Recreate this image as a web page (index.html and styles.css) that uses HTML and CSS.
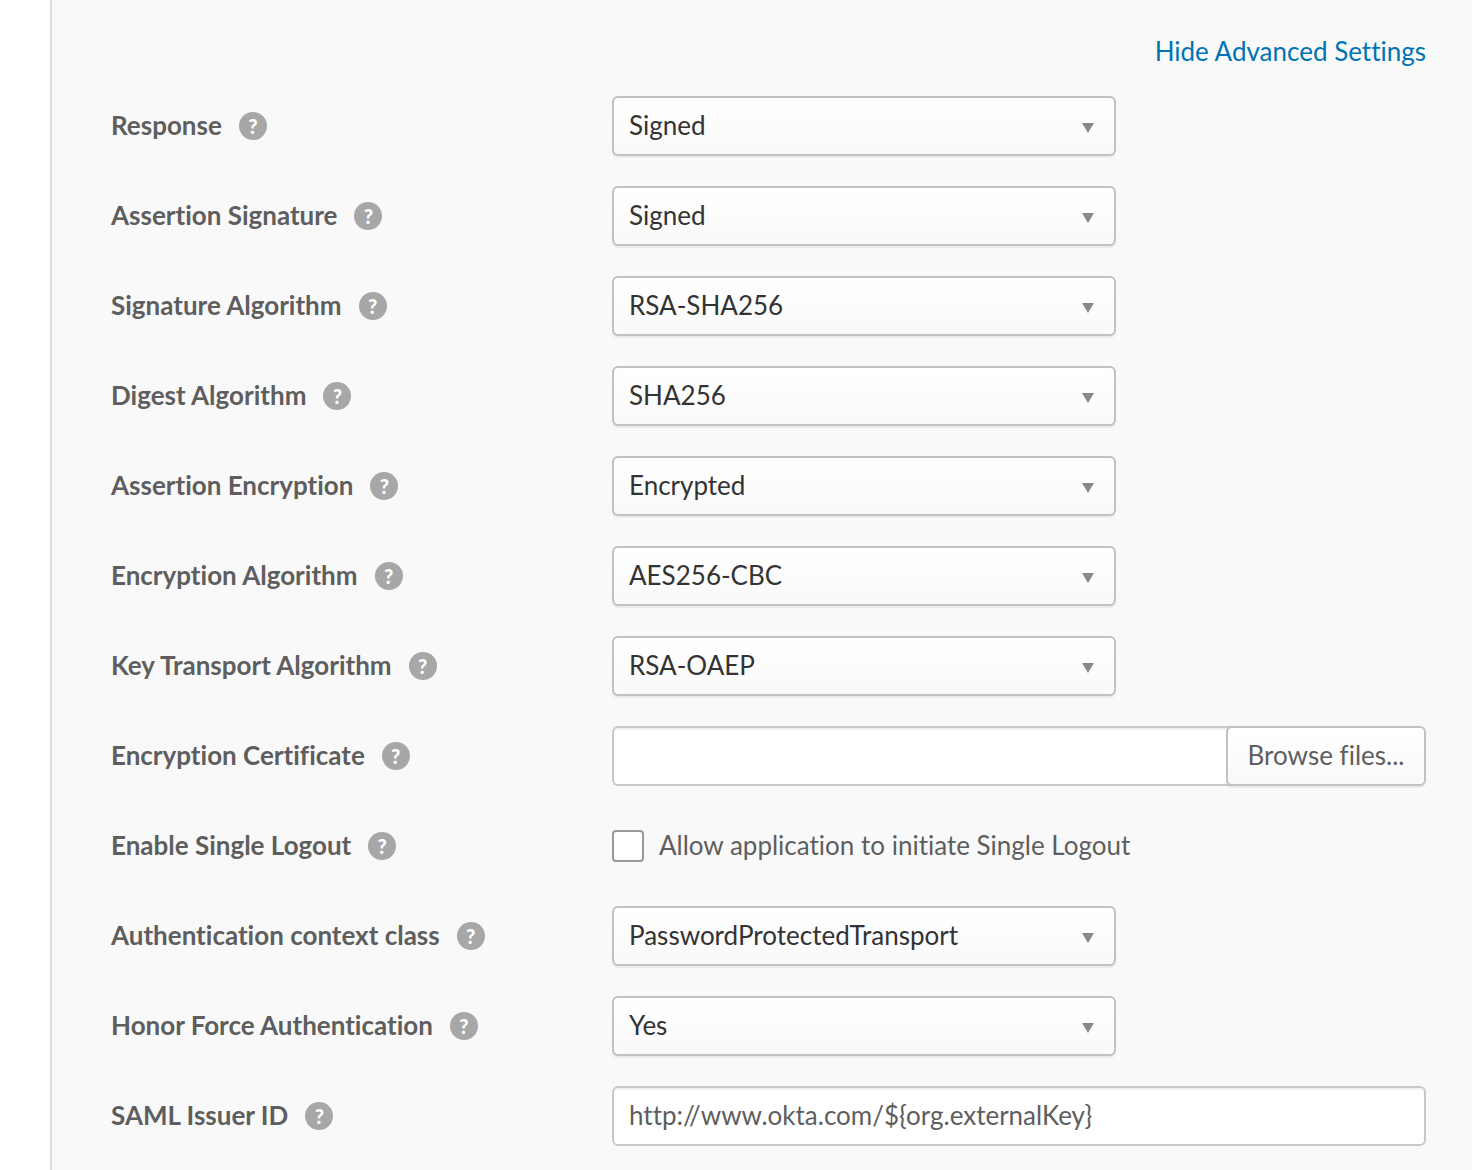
FILE: index.html
```html
<!DOCTYPE html>
<html lang="en">
<head>
  <meta charset="UTF-8">
  <meta name="viewport" content="width=device-width, initial-scale=1">
  <title>SAML Settings</title>
  <link rel="stylesheet" href="styles.css">
</head>
<body>

<main class="panel">
  <div class="toggle-bar">
    <a href="#">Hide Advanced Settings</a>
  </div>

  <form class="settings">
    <div class="row">
      <div class="row-label">
        <label for="response">Response</label>
        <button type="button" class="help" aria-label="Help">?</button>
      </div>
      <div class="select-box">
        <select id="response"><option>Signed</option><option>Unsigned</option></select>
      </div>
    </div>

    <div class="row">
      <div class="row-label">
        <label for="assertionSignature">Assertion Signature</label>
        <button type="button" class="help" aria-label="Help">?</button>
      </div>
      <div class="select-box">
        <select id="assertionSignature"><option>Signed</option><option>Unsigned</option></select>
      </div>
    </div>

    <div class="row">
      <div class="row-label">
        <label for="signatureAlgorithm">Signature Algorithm</label>
        <button type="button" class="help" aria-label="Help">?</button>
      </div>
      <div class="select-box">
        <select id="signatureAlgorithm"><option>RSA-SHA256</option><option>RSA-SHA1</option></select>
      </div>
    </div>

    <div class="row">
      <div class="row-label">
        <label for="digestAlgorithm">Digest Algorithm</label>
        <button type="button" class="help" aria-label="Help">?</button>
      </div>
      <div class="select-box">
        <select id="digestAlgorithm"><option>SHA256</option><option>SHA1</option></select>
      </div>
    </div>

    <div class="row">
      <div class="row-label">
        <label for="assertionEncryption">Assertion Encryption</label>
        <button type="button" class="help" aria-label="Help">?</button>
      </div>
      <div class="select-box">
        <select id="assertionEncryption"><option>Encrypted</option><option>Unencrypted</option></select>
      </div>
    </div>

    <div class="row">
      <div class="row-label">
        <label for="encryptionAlgorithm">Encryption Algorithm</label>
        <button type="button" class="help" aria-label="Help">?</button>
      </div>
      <div class="select-box">
        <select id="encryptionAlgorithm"><option>AES256-CBC</option><option>AES128-CBC</option></select>
      </div>
    </div>

    <div class="row">
      <div class="row-label">
        <label for="keyTransport">Key Transport Algorithm</label>
        <button type="button" class="help" aria-label="Help">?</button>
      </div>
      <div class="select-box">
        <select id="keyTransport"><option>RSA-OAEP</option><option>RSA-1.5</option></select>
      </div>
    </div>

    <div class="row">
      <div class="row-label">
        <label for="certificate">Encryption Certificate</label>
        <button type="button" class="help" aria-label="Help">?</button>
      </div>
      <div class="file-box">
        <input type="text" id="certificate" class="text-field">
        <button type="button" class="browse">Browse files...</button>
      </div>
    </div>

    <div class="row">
      <div class="row-label">
        <span>Enable Single Logout</span>
        <button type="button" class="help" aria-label="Help">?</button>
      </div>
      <div class="check-box">
        <input type="checkbox" id="singleLogout">
        <label for="singleLogout">Allow application to initiate Single Logout</label>
      </div>
    </div>

    <div class="row">
      <div class="row-label">
        <label for="authContext">Authentication context class</label>
        <button type="button" class="help" aria-label="Help">?</button>
      </div>
      <div class="select-box">
        <select id="authContext"><option>PasswordProtectedTransport</option></select>
      </div>
    </div>

    <div class="row">
      <div class="row-label">
        <label for="forceAuth">Honor Force Authentication</label>
        <button type="button" class="help" aria-label="Help">?</button>
      </div>
      <div class="select-box">
        <select id="forceAuth"><option>Yes</option><option>No</option></select>
      </div>
    </div>

    <div class="row">
      <div class="row-label">
        <label for="issuerId">SAML Issuer ID</label>
        <button type="button" class="help" aria-label="Help">?</button>
      </div>
      <input type="text" id="issuerId" class="text-field" value="http://www.okta.com/${org.externalKey}">
    </div>
  </form>
</main>

</body>
</html>
```
FILE: styles.css
```css
* {
  box-sizing: border-box;
}
body {
  margin: 0;
  background: #fff;
  color: #5e5e5e;
  font-family: Lato, sans-serif;
  font-size: 26px;
  line-height: 32px;
  font-variant-ligatures: none;
}
input,
select,
button {
  margin: 0;
  font: inherit;
  font-variant-ligatures: none;
}
.panel {
  min-height: 100vh;
  margin-left: 50px;
  padding: 35px 46px 24px 59px;
  border-left: 2px solid #ddd;
  background: #f9f9f9;
}
.toggle-bar {
  margin-bottom: 29px;
  text-align: right;
}
.toggle-bar a {
  color: #0074b3;
  text-decoration: none;
}
.settings {
  display: grid;
  gap: 30px;
}
.row {
  display: grid;
  grid-template-columns: 501px 1fr;
  align-items: center;
  height: 60px;
}
.row-label {
  display: flex;
  align-items: center;
  gap: 17px;
  font-weight: bold;
}
.row-label label,
.row-label span,
.check-box label {
  padding-bottom: 2px;
}
.help {
  width: 28px;
  height: 28px;
  padding: 0;
  border: none;
  border-radius: 50%;
  background: #a7a7a7;
  color: #fff;
  font-size: 20px;
  font-weight: 900;
  line-height: 28px;
  cursor: pointer;
}
.select-box {
  position: relative;
  max-width: 504px;
}
/* drop-down arrow */
.select-box::after {
  content: "";
  position: absolute;
  top: 27px;
  right: 22px;
  border: 6px solid transparent;
  border-top: 10px solid #888;
  border-bottom: none;
  pointer-events: none;
}
select {
  appearance: none;
  display: block;
  width: 100%;
  height: 60px;
  padding: 0 50px 2px 15px;
  border: 2px solid #c1c1c1;
  border-radius: 6px;
  background: linear-gradient(#fff, #f9f9f9);
  box-shadow: 0 2px 0 rgba(0, 0, 0, 0.06);
  color: #333;
}
.text-field {
  width: 100%;
  height: 60px;
  padding: 0 15px 2px;
  border: 2px solid #c9c9c9;
  border-radius: 6px;
  background: #fff;
  box-shadow: inset 0 2px 2px rgba(0, 0, 0, 0.06);
  color: #5e5e5e;
}
.file-box {
  display: flex;
}
.file-box .text-field {
  flex: 1;
  min-width: 0;
  border-right: none;
  border-radius: 6px 0 0 6px;
}
/* the button laps over the end of the field */
.browse {
  z-index: 1;
  width: 200px;
  height: 60px;
  margin-left: -6px;
  padding: 0 0 2px;
  border: 2px solid #c1c1c1;
  border-radius: 6px;
  background: linear-gradient(#fff, #f9f9f9);
  box-shadow: 0 2px 0 rgba(0, 0, 0, 0.06);
  color: #5e5e5e;
  white-space: nowrap;
}
.check-box {
  display: flex;
  align-items: center;
  gap: 15px;
}
.check-box input {
  appearance: none;
  width: 32px;
  height: 32px;
  border: 2px solid #999;
  border-radius: 4px;
  background: #fff;
}
.check-box input:checked {
  background: #0074b3;
}
```
